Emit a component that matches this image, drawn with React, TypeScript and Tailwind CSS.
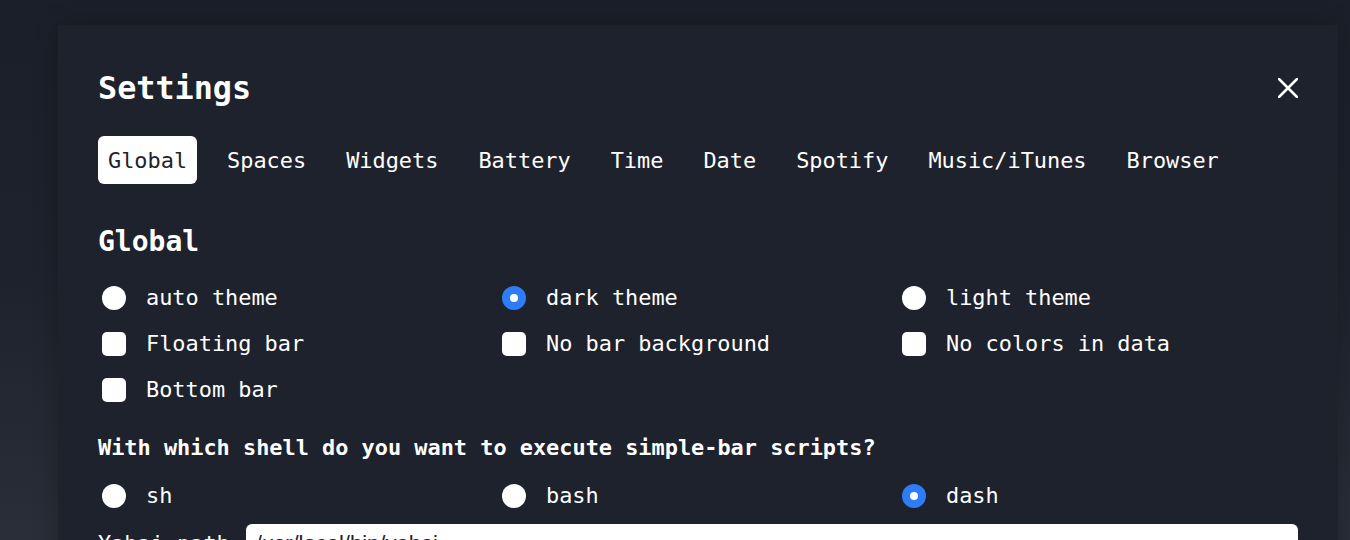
import React, { useState } from "react";

const mono = "font-['DejaVu_Sans_Mono','Liberation_Mono',monospace]";

const tabs = [
  "Global",
  "Spaces",
  "Widgets",
  "Battery",
  "Time",
  "Date",
  "Spotify",
  "Music/iTunes",
  "Browser",
];

const Radio: React.FC<{ checked?: boolean; label: string }> = ({ checked, label }) => (
  <label className="flex items-center h-[46px] cursor-pointer">
    <span
      className={
        checked
          ? "ml-1 w-6 h-6 rounded-full bg-[#2f7df6] flex items-center justify-center"
          : "ml-1 w-6 h-6 rounded-full bg-white"
      }
    >
      {checked && <span className="w-2 h-2 rounded-full bg-white" />}
    </span>
    <span className="ml-5">{label}</span>
  </label>
);

const Checkbox: React.FC<{ label: string }> = ({ label }) => (
  <label className="flex items-center h-[46px] cursor-pointer">
    <span className="ml-1 w-6 h-6 rounded-[5px] bg-white" />
    <span className="ml-5">{label}</span>
  </label>
);

const App: React.FC = () => {
  const [active, setActive] = useState("Global");

  return (
    <div className="h-[540px] overflow-hidden bg-gradient-to-b from-[#1b1f29] via-[#1e222c] to-[#2a2e38]">
      <div
        className={`ml-[58px] mt-[25px] w-[1280px] bg-[#1e222c] shadow-[0_0_24px_rgba(0,0,0,0.2)] px-10 pt-10 text-white text-[21.9px] ${mono}`}
      >
        {/* Header */}
        <div className="flex items-center justify-between h-[46px]">
          <h1 className="text-[31.8px] font-bold leading-[46px]">Settings</h1>
          <button className="w-5 h-5 flex items-center justify-center">
            <svg viewBox="0 0 20 20" className="w-5 h-5" fill="none" stroke="white" strokeWidth={2.5} strokeLinecap="round">
              <path d="M1 1L19 19M19 1L1 19" />
            </svg>
          </button>
        </div>

        {/* Tabs */}
        <div className="flex gap-5 mt-[25px]">
          {tabs.map((t) => (
            <button
              key={t}
              onClick={() => setActive(t)}
              className={
                active === t
                  ? "h-12 px-[10px] pt-[2px] rounded-md bg-white text-[#1e222c] leading-7"
                  : "h-12 px-[10px] pt-[2px] rounded-md text-white leading-7"
              }
            >
              {t}
            </button>
          ))}
        </div>

        {/* Global section */}
        <h2 className="mt-10 text-[28px] font-bold leading-9">Global</h2>
        <div className="grid grid-cols-3 mt-[15px]">
          <Radio label="auto theme" />
          <Radio label="dark theme" checked />
          <Radio label="light theme" />
          <Checkbox label="Floating bar" />
          <Checkbox label="No bar background" />
          <Checkbox label="No colors in data" />
          <Checkbox label="Bottom bar" />
        </div>

        <p className="mt-[21px] font-bold leading-7">
          With which shell do you want to execute simple-bar scripts?
        </p>
        <div className="grid grid-cols-3 mt-[11px]">
          <Radio label="sh" />
          <Radio label="bash" />
          <Radio label="dash" checked />
        </div>

        <div className="flex items-start gap-4 mt-[5px]">
          <span className="leading-7 mt-[6px]">Yabai path</span>
          <input
            defaultValue="/usr/local/bin/yabai"
            className="flex-1 h-10 rounded-md bg-white px-[10px] text-[#1e222c] text-[22px] font-['Liberation_Sans',Arial,sans-serif] outline-none"
          />
        </div>
        <div className="h-10" />
      </div>
    </div>
  );
};

export default App;
